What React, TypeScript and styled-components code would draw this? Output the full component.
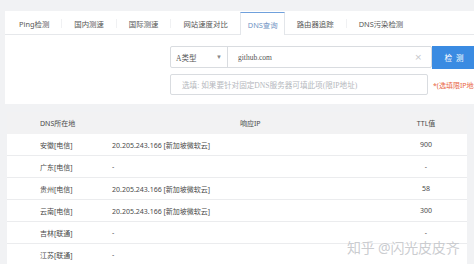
import React from "react";
import styled, { createGlobalStyle } from "styled-components";

const Global = createGlobalStyle`
  html, body { margin: 0; padding: 0; }
  body {
    width: 474px; height: 264px; overflow: hidden;
    background: #f1f2f4;
    font-family: "Noto Sans", "Noto Sans CJK SC", sans-serif;
  }
  * { box-sizing: border-box; }
`;

const Page = styled.div`
  position: relative;
  width: 474px;
  height: 264px;
  padding: 11px 0 0 5px;
`;

const Panel = styled.div`
  background: #fff;
`;

const TabBar = styled.div`
  display: flex;
  align-items: stretch;
  height: 24px;
  padding-top: 1px;
  border-bottom: 1px solid #e6e8eb;
  background: #fff;
`;

const Tab = styled.div<{ $active?: boolean; $first?: boolean }>`
  display: flex;
  align-items: center;
  padding: 0 ${(p) => (p.$active ? "6px" : "11px")} 0 ${(p) => (p.$first ? "13px" : p.$active ? "7px" : "11px")};
  font-size: 7.4px;
  color: ${(p) => (p.$active ? "#6f93c4" : "#555")};
  white-space: nowrap;
  background: #fff;
  border-top: 1px solid ${(p) => (p.$active ? "#6fa0dc" : "transparent")};
  border-left: 1px solid ${(p) => (p.$active ? "#e3e6ea" : "transparent")};
  border-right: 1px solid ${(p) => (p.$active ? "#e3e6ea" : "transparent")};
  margin-bottom: ${(p) => (p.$active ? "-1px" : "0")};
`;

const Sep = styled.div`
  align-self: center;
  width: 1px;
  height: 9px;
  background: #f0f1f3;
`;

const Form = styled.div`
  display: flex;
  flex-direction: column;
  gap: 5px;
  padding: 10px 0 9px 165px;
`;

const Row = styled.div`
  display: flex;
  align-items: center;
`;

const Group = styled.div`
  display: flex;
  flex-shrink: 0;
  width: 262px;
  height: 22px;
  border: 1px solid #d9dce0;
  border-radius: 2px;
  font-family: "Liberation Serif", "Noto Sans CJK SC", serif;
  font-size: 7.5px;
  color: #555;
`;

const Select = styled.div`
  display: flex;
  align-items: center;
  justify-content: space-between;
  width: 57px;
  padding: 0 5px 0 5px;
  border-right: 1px solid #d9dce0;
`;

const Caret = styled.span`
  font-size: 6px;
  color: #888;
`;

const Field = styled.div`
  flex: 1;
  display: flex;
  align-items: center;
  justify-content: space-between;
  padding: 0 9px 0 10px;
`;

const Clear = styled.span`
  font-family: "DejaVu Sans", sans-serif;
  font-size: 9px;
  color: #c4c6ca;
`;

const Button = styled.div`
  display: flex;
  align-items: center;
  justify-content: center;
  width: 44px;
  height: 23px;
  margin-top: 1px;
  background: #3a8be2;
  color: #fff;
  font-size: 7.5px;
  letter-spacing: 4px;
  padding-left: 4px;
  flex-shrink: 0;
`;

const Input2 = styled.div`
  display: flex;
  align-items: center;
  flex-shrink: 0;
  width: 258px;
  height: 21px;
  border: 1px solid #d9dce0;
  border-radius: 2px;
  padding-left: 11px;
  font-family: "Liberation Serif", "Noto Sans CJK SC", serif;
  font-size: 7.6px;
  color: #b4b7bc;
  white-space: nowrap;
  overflow: hidden;
`;

const Hint = styled.div`
  margin-left: 5px;
  font-size: 7px;
  color: #e8653f;
  white-space: nowrap;
`;

const Table = styled.div`
  margin: 8px 7px 0 2px;
  background: #fff;
`;

const TRow = styled.div<{ $head?: boolean }>`
  display: grid;
  grid-template-columns: 105px 273px 82px;
  height: 22px;
  align-items: center;
  background: ${(p) => (p.$head ? "#f2f2f3" : "#fff")};
  border-bottom: 1px solid ${(p) => (p.$head ? "transparent" : "#ebecee")};
  font-size: 7px;
  color: #4a4a4a;
`;

const Cell = styled.div<{ $pad?: number; $center?: boolean }>`
  padding-left: ${(p) => p.$pad ?? 0}px;
  text-align: ${(p) => (p.$center ? "center" : "left")};
  white-space: nowrap;
`;

const Watermark = styled.div`
  position: absolute;
  left: 347px;
  top: 237px;
  font-size: 14px;
  color: rgba(196, 198, 202, 0.9);
  text-shadow: 0 0 1px #fff, 1px 1px 0 rgba(255,255,255,0.8);
  white-space: nowrap;
  letter-spacing: -0.2px;
`;

const rows = [
  ["安徽[电信]", "20.205.243.166 [新加坡微软云]", "900"],
  ["广东[电信]", "-", "-"],
  ["贵州[电信]", "20.205.243.166 [新加坡微软云]", "58"],
  ["云南[电信]", "20.205.243.166 [新加坡微软云]", "300"],
  ["吉林[联通]", "-", "-"],
  ["江苏[联通]", "-", ""],
];

export default function App() {
  return (
    <>
      <Global />
      <Page>
        <Panel>
          <TabBar>
            <Tab $first>Ping检测</Tab>
            <Sep />
            <Tab>国内测速</Tab>
            <Sep />
            <Tab>国际测速</Tab>
            <Sep />
            <Tab>网站速度对比</Tab>
            <Tab $active>DNS查询</Tab>
            <Tab>路由器追踪</Tab>
            <Sep />
            <Tab>DNS污染检测</Tab>
          </TabBar>
          <Form>
            <Row>
              <Group>
                <Select>
                  <span>A类型</span>
                  <Caret>▼</Caret>
                </Select>
                <Field>
                  <span>github.com</span>
                  <Clear>×</Clear>
                </Field>
              </Group>
              <Button>检测</Button>
            </Row>
            <Row>
              <Input2>选填: 如果要针对固定DNS服务器可填此项(限IP地址)</Input2>
              <Hint>*(选填限IP地址)</Hint>
            </Row>
          </Form>
        </Panel>
        <Table>
          <TRow $head>
            <Cell $pad={33}>DNS所在地</Cell>
            <Cell $pad={128}>响应IP</Cell>
            <Cell $center>TTL值</Cell>
          </TRow>
          {rows.map((r) => (
            <TRow key={r[0]}>
              <Cell $pad={33}>{r[0]}</Cell>
              <Cell>{r[1]}</Cell>
              <Cell $center>{r[2]}</Cell>
            </TRow>
          ))}
        </Table>
        <Watermark>知乎 @闪光皮皮齐</Watermark>
      </Page>
    </>
  );
}
